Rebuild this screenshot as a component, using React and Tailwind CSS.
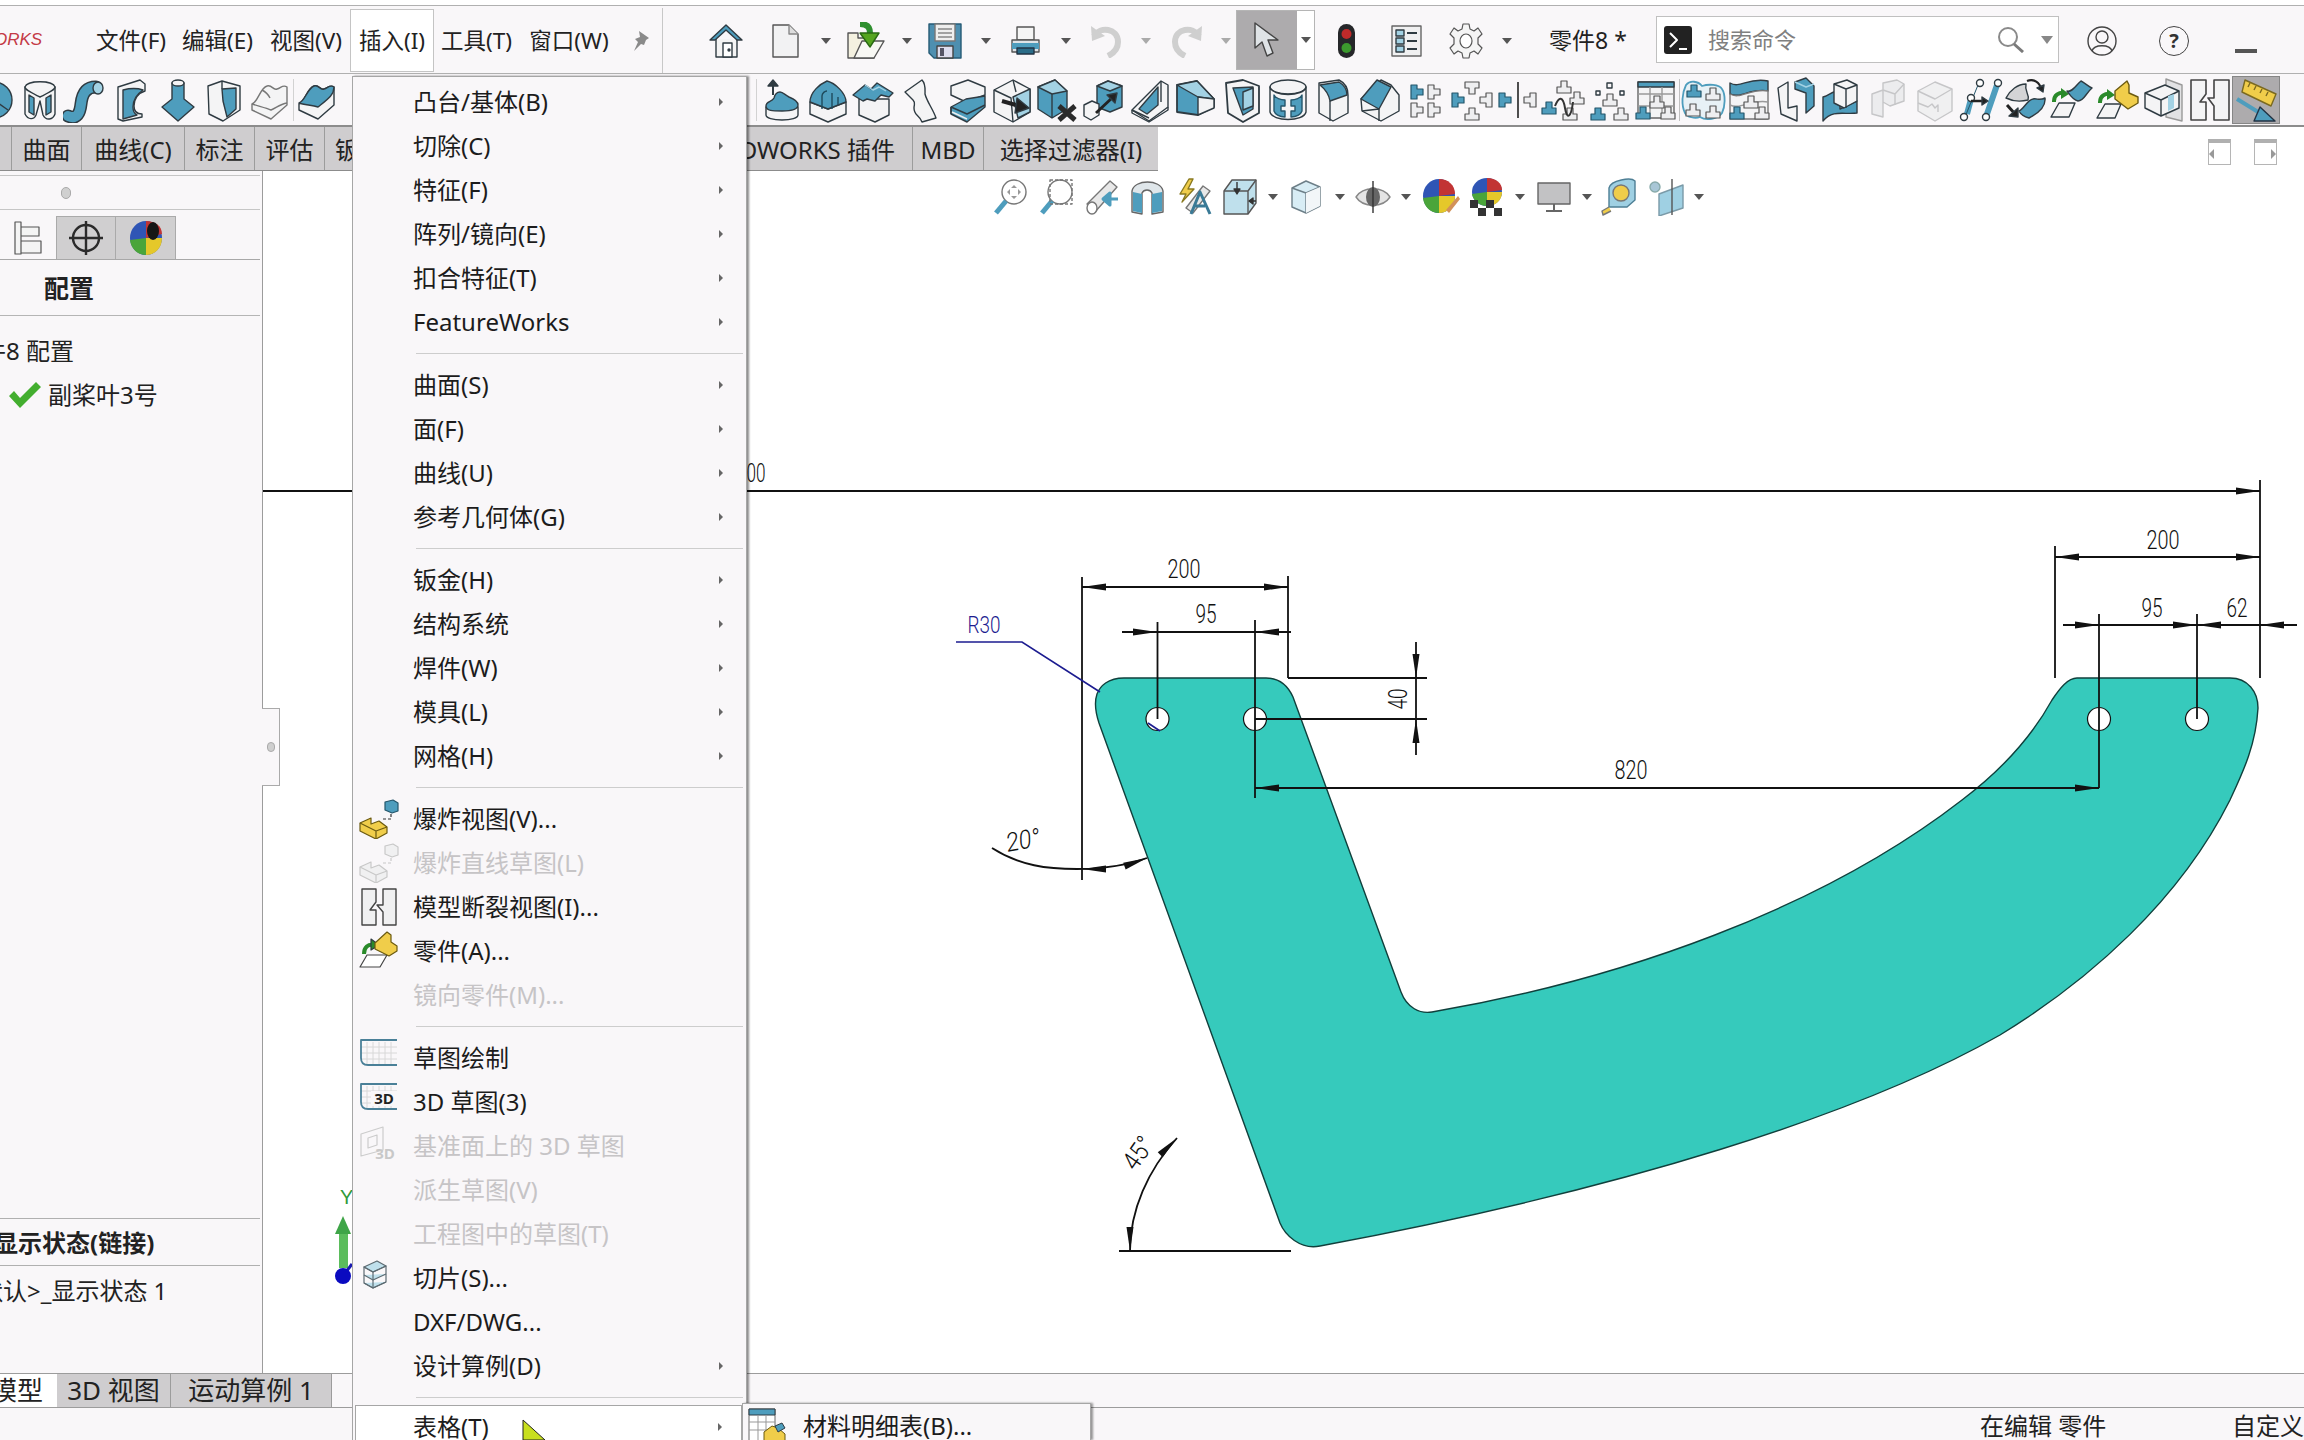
const INK = "#2f3b42";
const BL = "#4e9dbd";
const LB = "#a3d2e4";
const WH = "#f4f4f5";
const YE = "#f0cd4a";

function Ic({ children, w = 46, h = 46, box = "0 0 46 46", sw = 1.4 }) {
  return (
    <svg width={w} height={h} viewBox={box} fill="none" stroke={INK} strokeWidth={sw} strokeLinejoin="round" className="shrink-0 block">
      {children}
    </svg>
  );
}

function Tee({ x, y, r = 0, blue }) {
  return <path transform={`translate(${x} ${y}) rotate(${r})`} d="M-7-6H7V0H3V6H-3V0H-7Z" fill={blue ? BL : "#eeeef0"} stroke={blue ? "#24566b" : "#555"} strokeWidth="1.2" />;
}

function Caret({ off, className = "" }) {
  return <div className={`w-0 h-0 shrink-0 border-x-[5px] border-t-[6px] border-x-transparent ${off ? "border-t-[#aaaaaa]" : "border-t-[#555555]"} ${className}`} />;
}

/* left part of the feature toolbar */
const leftTools = [
  <><circle cx="23" cy="23" r="18" fill={BL} /><path d="M23 23l14 10" /></>,
  <><path d="M8 10V37c3 6 9 6 11 1l4-14 3 14c3 6 10 5 12-1V10Z" fill={WH} /><path d="M8 10c2-7 28-7 30 0 0 3-7 6-15 10-8-4-15-7-15-10Z" fill={WH} /><path d="M12 18l5 3v17l-5-3ZM34 18l-5 3v17l5-3Z" fill={BL} /></>,
  <><path d="M5 39c9 4 12-3 13-12s4-17 15-17" stroke={INK} strokeWidth="13" strokeLinecap="round" /><path d="M5 39c9 4 12-3 13-12s4-17 15-17" stroke={BL} strokeWidth="10" strokeLinecap="round" /><ellipse cx="35" cy="11" rx="5" ry="6" fill={LB} /></>,
  <><path d="M9 10 31 3l5 4v7c-7 2-11 8-11 15 0 5 3 8 8 8v3L14 44l-5-2Z" fill={WH} /><path d="M14 13c8-2 14-2 20 0-6 4-10 10-10 17 0 4 2 7 4 8l-14 4Z" fill={BL} /></>,
  <><path d="M17 6V22L7 30 23 44 39 30 29 22V6Z" fill={BL} /><ellipse cx="23" cy="6" rx="6" ry="3" fill={WH} /></>,
  <><path d="M7 9 21 4 39 9V33L22 44 8 37Z" fill={WH} /><path d="M21 12 35 11V32L26 40 22 24Z" fill={BL} /><path d="M21 4V12" /></>,
  <g stroke="#777"><path d="M5 27c6-2 8-16 15-18 5-2 6 5 10 3 4-1 6-5 10-2V28L24 42 5 33Z" fill={WH} /><path d="M5 27c6 2 14 4 19 6 5-2 9-6 16-7" /><path d="M15 13c4 2 6 4 8 8" /></g>,
  <><path d="M5 27c6-2 8-16 15-18 5-2 6 5 10 3 4-1 6-5 10-2V28L24 42 5 33Z" fill={WH} /><path d="M5 26c6-2 8-14 15-17 5-2 6 5 10 3 4-1 6-5 10-2 0 8-6 12-16 20C18 28 10 28 5 26Z" fill={BL} /></>,
];

/* feature toolbar, first group */
const midTools = [
  <><path d="M7 30v8c0 3 7 5 16 5s16-2 16-5v-8Z" fill={WH} /><path d="M7 29c0-5 6-4 8-8 1-4 3-6 6-6s5 3 9 5c5 2 9 4 9 8 0 4-7 6-16 6S7 34 7 29Z" fill={BL} /><path d="M14 18V6" strokeWidth="2" /><path d="M9 9l5-6 5 6Z" fill={INK} /></>,
  <><path d="M5 25V37L23 45 41 37V25L23 32Z" fill={WH} /><path d="M5 25C5 15 15 7 22 4c8 2 19 12 19 21L23 32Z" fill={BL} /><path d="M17 32V19c0-3 3-5 5-5M27 32V16M33 28V20" stroke="#1e4a5c" /></>,
  <><path d="M8 22V38L24 45 38 38V22Z" fill={WH} /><path d="M2 18 14 8l6 4 6-6 16 10-4 4-8-2-6 6-8-2-4 2Z" fill={BL} /><path d="M14 8l8 5 6-3 7 4" stroke={LB} /></>,
  <path d="M8 15 25 3c4 4 3 10 3 14 2 8 8 15 11 24l-14 4c-3-8-8-6-8-14 0-4 2-5-1-8Z" fill={WH} />,
  <><path d="M8 9 25 3 42 10V18L23 25 8 18Z" fill={WH} /><path d="M8 30 23 22 42 19V30L24 45 8 37Z" fill={BL} /><path d="M8 30 24 37 42 28M8 37V30" /><path d="M9 35l15 7" stroke="#eee" /></>,
  <><path d="M5 13 24 3 41 12V35L24 45 5 35Z" fill={WH} /><path d="M24 20 41 12V35L29 41Z" fill={LB} /><path d="M5 13l17 8 2 24M24 3l3 12" /><path d="M13 24 30 29" strokeWidth="4" stroke="#222" /><path d="M28 21 40 31 26 36Z" fill="#222" /></>,
  <><path d="M3 10 20 3 32 14V32L17 41 3 32Z" fill={BL} /><path d="M3 10 17 17 32 14 20 3Z" fill={LB} /><path d="M17 17V41" /><path d="M24 29 40 43M40 29 24 43" stroke="#2b2b2b" strokeWidth="5" /></>,
  <><path d="M16 9 27 4 41 9V30L29 35 16 30Z" fill={BL} /><path d="M16 9 29 14 41 9 27 4Z" fill={LB} /><path d="M3 28 11 24 18 27V38L10 43 3 39Z" fill={WH} /><path d="M15 36 32 20" strokeWidth="3" stroke="#222" /><path d="M26 18 36 16 34 26Z" fill="#222" /></>,
  <><path d="M5 33 34 4 41 8V30L22 44Z" fill={WH} /><path d="M12 32 31 10V28L20 37Z" fill={BL} /><path d="M34 4V25M5 33l17 8" /><path d="M5 33V36L22 45 41 33V30" /></>,
  <><path d="M4 8 24 4 41 22V30L25 38 4 35Z" fill={BL} strokeWidth="1.8" /><path d="M4 8 24 4 41 22 25 20Z" fill={LB} /><path d="M25 20V38L41 31V22Z" fill={WH} /></>,
  <><path d="M7 6 24 3 40 9V36L24 45 9 36Z" fill={WH} strokeWidth="1.8" /><path d="M14 11 34 10V32L24 38Z" fill={BL} /><path d="M24 15 34 11V29L24 33Z" fill={LB} /></>,
  <><ellipse cx="23" cy="10" rx="18" ry="7" fill={WH} /><path d="M5 10V35c2 10 34 10 36 0V10c-2 10-34 10-36 0Z" fill={WH} /><path d="M9 18c1 3 7 5 11 5v6h-4v5h4v6c-6 0-10-3-11-6ZM37 18c-1 3-7 5-11 5v6h4v5h-4v6c6 0 10-3 11-6Z" fill={BL} stroke="#24566b" /></>,
  <><path d="M8 6 28 3c6 3 9 9 9 15V36L22 44 8 36Z" fill={WH} /><path d="M9 8 28 5c5 3 8 8 8 13L19 24c-1-6-5-12-10-16Z" fill={BL} /><path d="M19 24V44" /></>,
  <><path d="M4 22 24 3 34 8 42 18V34L24 44 5 34Z" fill={WH} /><path d="M4 22 20 3 34 10 22 32Z" fill={BL} /><path d="M22 32V44M5 34l17-2" /></>,
  <><Tee x={14} y={15} r={-90} blue /><Tee x={31} y={15} r={-90} /><Tee x={14} y={33} r={-90} /><Tee x={31} y={33} r={-90} /></>,
];

const patternTools = [
  <><Tee x={23} y={11} /><Tee x={9} y={23} r={-90} blue /><Tee x={37} y={23} r={90} /><Tee x={23} y={37} r={180} /></>,
  <><Tee x={10} y={23} r={-90} blue /><Tee x={35} y={23} r={90} /><path d="M23 5V41" strokeWidth="1.6" stroke="#222" /></>,
  <><Tee x={23} y={10} r={180} /><Tee x={8} y={31} r={180} blue /><Tee x={36} y={21} r={180} /><Tee x={29} y={37} r={180} /><path d="M14 29c4-10 8-10 10 2s6 10 8-6" stroke="#333" strokeWidth="2" /></>,
  <><rect x="20" y="6" width="5" height="5" /><rect x="9" y="14" width="4" height="4" /><rect x="33" y="14" width="4" height="4" /><Tee x={23} y={23} r={180} /><Tee x={11} y={37} r={180} blue /><Tee x={34} y={37} r={180} /></>,
  <><rect x="5" y="5" width="36" height="36" fill={WH} stroke="#666" /><rect x="5" y="5" width="36" height="5" fill={BL} /><path d="M5 17H41M5 29H41M17 10V41M29 10V41" stroke="#999" /><Tee x={24} y={25} r={180} /><Tee x={10} y={36} r={180} blue /><Tee x={35} y={36} r={180} /></>,
  <><path d="M5 8c4-5 12-4 16 1 6-2 17-2 20 3 4 6 3 18 0 24-4 6-16 8-22 4-5 2-13 0-15-4-4-8-3-20 1-28Z" fill="#e7f1f6" stroke="#4e9dbd" strokeWidth="1.8" /><Tee x={13} y={14} r={180} blue /><Tee x={32} y={17} r={180} /><Tee x={12} y={33} r={180} /><Tee x={32} y={35} r={180} /></>,
  <><path d="M3 6c10 6 18-6 38-2V14c-18-3-28 8-38 3Z" fill={BL} /><path d="M3 17c10 6 20-6 38-3V42H3Z" fill={WH} stroke="#777" /><path d="M3 28c10 5 20-6 38-3" stroke="#999" /><Tee x={24} y={25} r={180} /><Tee x={10} y={36} r={180} blue /><Tee x={35} y={36} r={180} /></>,
  <><path d="M5 11 15 5V31L24 29V44L8 37Z" fill={WH} /><path d="M22 5 33 1 41 9V29L33 36V16L22 12Z" fill={BL} /><path d="M22 5 33 10 41 7" stroke={LB} /></>,
  <><path d="M4 44V20C12 18 14 12 21 16V32L38 24V36C26 38 14 32 4 44Z" fill={BL} /><path d="M15 7 28 3 38 8V24L25 31 15 26Z" fill={WH} /><path d="M15 7 27 12 38 8M27 12V31" /></>,
  <g stroke="#c6c6c8" fill="#ececee"><path d="M7 17 18 13 18 40 7 37ZM18 6 32 3 39 7V24L25 29 18 25Z" /><path d="M18 13 30 17 39 7M30 17V28" /></g>,
  <g stroke="#c6c6c8" fill="#f0f0f1"><path d="M7 14 24 5 41 12V34L24 44 7 34Z" /><path d="M7 14 24 22 41 12M7 26l10 4 4-3 3 4 3-3v7" /></g>,
  <><path d="M10 37 14 22M30 37 40 8" stroke={BL} strokeWidth="6" /><path d="M8 40 21 8" stroke="#24566b" strokeWidth="1" /><circle cx="7" cy="40" r="3.5" fill="#fff" /><circle cx="14" cy="21" r="3.5" fill="#fff" /><circle cx="23" cy="6" r="3.5" fill="#fff" /><circle cx="29" cy="40" r="3.5" fill="#fff" /><circle cx="41" cy="6" r="3.5" fill="#fff" /><path d="M14 24H28" stroke="#222" strokeWidth="2.5" /><path d="M25 20l6 4-6 4Z" fill="#222" /></>,
  <><path d="M3 21c4-8 12-14 20-14-2 8 4 10 2 16-8 2-16 1-22-2Z" fill="#d4d4d6" /><path d="M16 34c5-2 8-11 14-12 4-1 6 2 12-1 1 9-8 16-16 20-4-1-8-3-10-7Z" fill={BL} /><path d="M24 4c7-3 13 2 14 8" strokeWidth="2.2" stroke="#222" /><path d="M34 11l6 4 1-7Z" fill="#222" /><path d="M4 28 13 38" strokeWidth="3" stroke="#222" /><path d="M6 39 15 40 15 31Z" fill="#222" /></>,
  <><path d="M2 40 10 26H26L20 40Z" fill={WH} /><path d="M5 25V24c0-6 5-9 11-8" stroke="#2a8a2a" strokeWidth="4" /><path d="M12 11l8 6-8 5Z" fill="#2a8a2a" stroke="none" /><path d="M18 14c5 2 9-6 14-10 4 2 8 6 11 7-6 5-8 13-14 13-5-1-8-6-11-10Z" fill={BL} /></>,
  <><path d="M2 41 10 27H26L20 41Z" fill={WH} /><path d="M5 26V25c0-6 5-9 11-8" stroke="#2a8a2a" strokeWidth="4" /><path d="M12 12l8 6-8 5Z" fill="#2a8a2a" stroke="none" /><path d="M20 14 32 4 34 8V16L43 20V26L33 32 20 22Z" fill={YE} stroke="#6b5a10" /></>,
  <><path d="M25 2 41 8V44L25 40Z" fill="#e2e2e4" stroke="#999" /><path d="M4 16 24 8 38 14V31L20 39 4 31Z" fill={WH} /><path d="M4 16 20 23 38 14M20 23V39" /><path d="M27 19 33 17V31L27 34Z" fill={LB} stroke="none" /></>,
  <g fill={WH} stroke="#444" strokeWidth="1.6"><path d="M4 3H19V17L13 25H19V43H4Z" /><path d="M27 3H42V43H27V29L21 21H27Z" /></g>,
];

function Ruler() {
  return (
    <>
      <path d="M12 3 43 17 38 29 9 15Z" fill={YE} stroke="#7b6a20" />
      <path d="M17 6l-2 4M23 9l-2 4M29 12l-2 4M35 15l-2 4" stroke="#7b6a20" />
      <path d="M4 22 30 38" stroke={BL} strokeWidth="4" />
      <path d="M27 30 42 44H21Z" fill={BL} stroke="#234" />
    </>
  );
}

function Tool({ children, hi }) {
  return <div className={`w-[46px] h-[46px] shrink-0 ${hi ? "bg-[#adabad] outline outline-1 outline-[#868686]" : ""}`}><Ic>{children}</Ic></div>;
}

function TitleBar() {
  const menus = [
    ["文件(F)", "w-[86px]"],
    ["编辑(E)", "w-[87px]"],
    ["视图(V)", "w-[90px]"],
    ["插入(I)", "w-[82px]"],
    ["工具(T)", "w-[87px]"],
    ["窗口(W)", "w-[98px]"],
  ];
  return (
    <div className="h-[68px] flex items-center border-b border-[#b0b0b0] bg-[#f9f7f9] pt-[2px]">
      <div className="w-[88px] h-full overflow-hidden flex items-center -mt-[1px]">
        <span className="text-[17px] italic text-[#c43a46] -ml-[6px] font-['Liberation_Sans',sans-serif]">ORKS</span>
      </div>
      {menus.map(([m, w]) => (
        <div key={m} className={`h-[61px] flex items-center justify-center text-[22.5px] text-[#222] whitespace-nowrap ${w} ${m === "插入(I)" ? "bg-white outline outline-1 outline-[#c4c4c4]" : ""}`}>{m}</div>
      ))}
      <div className="ml-[13px]">
        <Ic w={20} h={22} box="0 0 20 22" sw={0}>
          <path d="M8 1l10 7-3 2-2 5-3-1-7 7 4-9-3-3 5-2Z" fill="#8a8a8a" />
        </Ic>
      </div>
      <div className="ml-[11px] w-px h-full bg-[#c8c8c8]" />
      <div className="ml-[46px]"><Ic w={34} h={36} box="0 0 34 36"><path d="M7 16V34H28V16" fill="#f4f4f4" /><path d="M1 17 17 2 33 17 28 17 17 7 6 17Z" fill="#4e9dbd" /><rect x="14" y="20" width="9" height="14" fill="#fff" /><circle cx="20" cy="27" r="1" fill={INK} /></Ic></div>
      <div className="ml-[28px]"><Ic w={28} h={36} box="0 0 28 36"><path d="M2 2H18L27 11V34H2Z" fill="#f2f2f3" stroke="#555" /><path d="M18 2V11H27" fill="#ddd" stroke="#888" /></Ic></div>
      <Caret className="ml-[22px]" />
      <div className="ml-[15px]"><Ic w={39} h={38} box="0 0 39 38"><path d="M2 11H12V16H28V36H2Z" fill="#f4f1e0" stroke="#555" /><path d="M8 36 16 19H38L28 36Z" fill="#f8f8f4" stroke="#555" /><path d="M14 2C22 2 24 6 24 11" stroke="#2f8f2f" strokeWidth="6" /><path d="M14 11H33L24 25Z" fill="#55a51f" stroke="#2a6a14" /></Ic></div>
      <Caret className="ml-[17px]" />
      <div className="ml-[16px]"><Ic w={34} h={36} box="0 0 34 36"><path d="M1 1H33V35H6L1 30Z" fill="#4e8fb0" stroke="#255a75" /><rect x="7" y="1" width="20" height="17" fill="#eee" stroke="#777" /><path d="M10 6H24M10 10H24M10 14H24" stroke="#888" /><rect x="9" y="23" width="16" height="12" fill="#dde" stroke="#444" /><rect x="12" y="25" width="4" height="8" fill="#556" stroke="none" /></Ic></div>
      <Caret className="ml-[19px]" />
      <div className="ml-[19px]"><Ic w={31} h={30} box="0 0 31 30"><rect x="7" y="1" width="17" height="13" fill="#f5f5f5" stroke="#555" /><path d="M2 14H29V26H2Z" fill="#dfe3e6" stroke="#555" /><rect x="2" y="17" width="27" height="6" fill="#4e9dbd" stroke="none" /><rect x="7" y="22" width="17" height="6" fill="#2b6c88" stroke="#234" /></Ic></div>
      <Caret className="ml-[20px]" />
      <div className="ml-[19px]"><Ic w={32} h={34} box="0 0 32 34"><path d="M4 12C10 2 28 4 28 18 28 25 24 29 18 32" stroke="#cfcfcf" strokeWidth="6" /><path d="M1 2 2 17 15 12Z" fill="#cfcfcf" stroke="none" /></Ic></div>
      <Caret off className="ml-[19px]" />
      <div className="ml-[19px]"><Ic w={33} h={34} box="0 0 33 34"><path d="M29 12C23 2 5 4 5 18 5 25 9 29 15 32" stroke="#cfcfcf" strokeWidth="6" /><path d="M32 2 31 17 18 12Z" fill="#cfcfcf" stroke="none" /></Ic></div>
      <Caret off className="ml-[18px]" />
      <div className="ml-[5px] h-[60px] w-[79px] flex border border-[#b5b5b5] -mt-[2px]">
        <div className="w-[60px] bg-[#adabad] flex items-center justify-center">
          <Ic w={28} h={36} box="0 0 28 36"><path d="M2 1V26L9 20 14 34 20 31 15 18 25 18Z" fill="#dfe3e6" stroke="#444" /></Ic>
        </div>
        <div className="flex-1 bg-white flex items-center justify-center"><Caret /></div>
      </div>
      <div className="ml-[23px]"><Ic w={17} h={34} box="0 0 17 34" sw={0}><rect x="0" y="0" width="17" height="34" rx="8.5" fill="#26272a" /><circle cx="8.5" cy="10" r="5" fill="#c02a2a" /><circle cx="8.5" cy="24" r="5" fill="#3c9a2e" /></Ic></div>
      <div className="ml-[36px]"><Ic w={31} h={32} box="0 0 31 32"><rect x="1" y="1" width="29" height="30" fill="#f0f0f1" stroke="#666" /><rect x="5" y="5" width="8" height="6" fill={LB} /><rect x="5" y="13" width="8" height="6" fill={LB} /><rect x="5" y="21" width="8" height="6" fill={LB} /><path d="M16 8H26M16 16H26M16 24H26" strokeWidth="2" /></Ic></div>
      <div className="ml-[27px]"><Ic w={34} h={36} box="0 0 34 36" sw={1.2}><path d="M14 1H20L21 6 25 8 29 5 33 11 29 15V21L33 25 29 31 25 28 21 30 20 35H14L13 30 9 28 5 31 1 25 5 21V15L1 11 5 5 9 8 13 6Z" fill="#f5f5f5" stroke="#555" /><ellipse cx="17" cy="18" rx="6" ry="7" fill="#fff" stroke="#555" /></Ic></div>
      <Caret className="ml-[19px]" />
      <div className="ml-[37px] w-[107px] text-[23px] text-[#222] whitespace-nowrap">零件8 *</div>
      <div className="w-[403px] h-[47px] bg-white border border-[#c0c0c0] flex items-center pl-[7px] -mt-[2px]">
        <Ic w={28} h={28} box="0 0 28 28" sw={2}><rect x="0" y="0" width="28" height="28" rx="3" fill="#222" stroke="none" /><path d="M6 7 13 14 6 21" stroke="#fff" /><path d="M15 23H23" stroke="#fff" /></Ic>
        <span className="ml-[16px] text-[22px] text-[#808080]">搜索命令</span>
        <div className="ml-[201px]"><Ic w={29} h={26} box="0 0 29 26" sw={2}><circle cx="11" cy="10" r="9" stroke="#8a8a8a" /><path d="M17 17 26 25" stroke="#7a7a7a" strokeWidth="3" /></Ic></div>
        <Caret className="ml-[15px] !border-x-[6px] !border-t-[8px] !border-t-[#888888]" />
      </div>
      <div className="ml-[28px]"><Ic w={30} h={30} box="0 0 30 30"><circle cx="15" cy="15" r="14" stroke="#444" /><circle cx="15" cy="11" r="6" stroke="#444" /><path d="M5 25c2-7 18-7 20 0" stroke="#444" /></Ic></div>
      <div className="ml-[42px] w-[30px] h-[30px] rounded-full border-[1.5px] border-[#444] flex items-center justify-center text-[20px] font-bold text-[#333]">?</div>
      <div className="ml-[46px] mt-[21px] w-[22px] h-[4px] bg-[#555]" />
    </div>
  );
}

function FeatureBar() {
  return (
    <div className="h-[53px] flex items-center border-b-2 border-[#8c8c8c] bg-[#f9f7f9] overflow-hidden">
      <div className="flex items-center -ml-[29px]">
        {leftTools.slice(0, 7).map((t, i) => <Tool key={i}>{t}</Tool>)}
        <div className="w-px h-[42px] bg-[#d2d2d2]" />
        <Tool>{leftTools[7]}</Tool>
      </div>
      <div className="ml-[416px] w-px h-[42px] bg-[#d2d2d2]" />
      <div className="ml-[2px] flex items-center">
        {midTools.map((t, i) => <Tool key={i}>{t}</Tool>)}
        {patternTools.slice(0, 5).map((t, i) => <Tool key={i}>{t}</Tool>)}
      </div>
      <div className="w-px h-[42px] bg-[#c0c0c0]" />
      <div className="ml-px flex items-center">
        {patternTools.slice(5).map((t, i) => <Tool key={i}>{t}</Tool>)}
        <Tool hi><Ruler /></Tool>
      </div>
    </div>
  );
}

function TabRow() {
  const cell = "h-full flex items-center border-r border-[#9c9c9c] justify-center shrink-0 pt-[2px]";
  return (
    <div className="h-[44px] flex">
      <div className="h-full w-[1158px] flex bg-[#cfcdcf] border-b border-[#8c8c8c] text-[24px] text-[#222] whitespace-nowrap">
        <div className={`${cell} w-[12px]`} />
        <div className={`${cell} w-[70px]`}>曲面</div>
        <div className={`${cell} w-[103px]`}>曲线(C)</div>
        <div className={`${cell} w-[70px]`}>标注</div>
        <div className={`${cell} w-[70px]`}>评估</div>
        <div className={`${cell} w-[588px] !justify-between px-[10px] pr-[17px]`}>
          <span>钣金</span>
          <span>SOLIDWORKS 插件</span>
        </div>
        <div className={`${cell} w-[71px]`}>MBD</div>
        <div className="h-full flex-1 flex items-center justify-center pt-[2px]">选择过滤器(I)</div>
      </div>
      <div className="flex-1 bg-white flex justify-end items-start pt-[12px] gap-[23px] pr-[27px]">
        <div className="w-[23px] h-[26px] border border-[#b5b5b5] border-t-[4px] border-t-[#b0b0b0] flex items-center">
          <div className="w-0 h-0 border-y-[5px] border-r-[5px] border-y-transparent border-r-[#999]" />
        </div>
        <div className="w-[23px] h-[26px] border border-[#b5b5b5] border-t-[4px] border-t-[#b0b0b0] flex items-center justify-end">
          <div className="w-0 h-0 border-y-[5px] border-l-[5px] border-y-transparent border-l-[#999]" />
        </div>
      </div>
    </div>
  );
}

function SidePanel() {
  return (
    <div className="w-[263px] shrink-0 h-full bg-[#f9f7f9] border-r border-[#9c9c9c] flex flex-col relative z-10 text-[24px] text-[#222]">
      <div className="mt-[4px] h-[35px] mr-[2px] border-y border-[#c6c6c6] flex items-center">
        <div className="ml-[61px] w-[10px] h-[12px] rounded-full bg-[#d0d0d0] border border-[#aaa]" />
      </div>
      <div className="mt-[6px] h-[44px] mr-[2px] flex border-b border-[#a8a8a8]">
        <div className="w-[56px] flex items-center justify-center">
          <Ic w={30} h={36} box="0 0 30 36" sw={1.2}><path d="M2 2H8V34H2ZM8 7H26V16H8ZM8 21H28V33H8Z" fill="#f4f4f4" stroke="#555" /></Ic>
        </div>
        <div className="w-[60px] bg-[#d0cfd0] border border-[#aaa] border-b-0 flex items-center justify-center">
          <Ic w={36} h={36} box="0 0 36 36" sw={2.4}><circle cx="18" cy="18" r="13" stroke="#2b2b2b" /><path d="M18 1V35M1 18H35" stroke="#2b2b2b" /></Ic>
        </div>
        <div className="w-[60px] bg-[#d0cfd0] border border-[#aaa] border-b-0 border-l-0 flex items-center justify-center">
          <Ic w={34} h={36} box="0 0 34 36" sw={0}>
            <ellipse cx="17" cy="18" rx="16" ry="17" fill="#2f55b5" />
            <path d="M17 18 33 14C33 6 26 1 17 1Z" fill="#c23434" />
            <path d="M17 18 33 18C33 28 26 35 17 35Z" fill="#e5c82a" />
            <path d="M17 18 1 20C2 29 9 35 17 35Z" fill="#4aa53a" />
            <ellipse cx="24" cy="11" rx="6" ry="9" fill="#161616" />
          </Ic>
        </div>
      </div>
      <div className="h-[56px] mr-[2px] border-b border-[#b5b5b5] flex items-center pl-[44px] pt-[3px] font-bold text-[25px]">配置</div>
      <div className="mt-[20px] h-[30px] -ml-[18px] flex items-center whitespace-nowrap">件8 配置</div>
      <div className="mt-[14px] h-[30px] flex items-center whitespace-nowrap">
        <div className="ml-[8px] w-[40px]">
          <Ic w={33} h={28} box="0 0 33 28" sw={0}><path d="M1 15 6 10 12 17 28 1 33 6 12 27Z" fill="#43ae2f" /></Ic>
        </div>
        副桨叶3号
      </div>
      <div className="flex-1" />
      <div className="h-[48px] mr-[2px] border-y border-[#b0b0b0] flex items-center -ml-[6px] pt-[1px] font-bold whitespace-nowrap">显示状态(链接)</div>
      <div className="h-[107px] pt-[7px] -ml-[21px] whitespace-nowrap">默认&gt;_显示状态 1</div>
      {/* collapse handle */}
      <div className="absolute left-[262px] top-[537px] w-[18px] h-[78px] bg-[#f9f7f9] border border-l-0 border-[#aaa] flex items-center justify-center">
        <div className="w-[8px] h-[10px] rounded-full bg-[#cfcfcf] border border-[#aaa]" />
      </div>
    </div>
  );
}

function Dim({ x, y, t, w, r, size = 26, fill = "#111", it }) {
  return (
    <text
      x={x}
      y={y + 9}
      textAnchor="middle"
      textLength={w}
      lengthAdjust="spacingAndGlyphs"
      fontSize={size}
      fill={fill}
      stroke="none"
      fontStyle={it ? "italic" : "normal"}
      transform={r ? `rotate(${r} ${x} ${y})` : undefined}
      className="font-['Roboto',sans-serif] font-light"
    >
      {t}
    </text>
  );
}

const dimLines = [
  [263, 491, 2260, 491], [2260, 480, 2260, 678], [1082, 577, 1082, 880], [1288, 576, 1288, 678],
  [1288, 678, 1427, 678], [1082, 587, 1288, 587], [1122, 632, 1291, 632], [1157.5, 622, 1157.5, 719],
  [1255, 620, 1255, 798], [1255, 719, 1427, 719], [1416, 642, 1416, 755], [1255, 788, 2099, 788],
  [2099, 614, 2099, 788], [2055, 546, 2055, 678], [2055, 557, 2260, 557], [2063, 625, 2297, 625],
  [2197, 614, 2197, 719], [1119, 1251, 1291, 1251],
];

const dimArrows = [
  [2260, 491, 1, 0], [1082, 587, -1, 0], [1288, 587, 1, 0], [1157, 632, 1, 0], [1255, 632, -1, 0],
  [1416, 678, 0, 1], [1416, 719, 0, -1], [1255, 788, -1, 0], [2099, 788, 1, 0], [2055, 557, -1, 0],
  [2260, 557, 1, 0], [2099, 625, 1, 0], [2197, 625, 1, 0], [2197, 625, -1, 0], [2260, 625, -1, 0],
  [1082, 869, -1, 0], [1147, 858, 0.94, -0.34], [1130, 1251, 0, 1], [1177, 1138, 0.7, -0.7],
];

function arrowPoints([x, y, dx, dy]) {
  const bx = x - dx * 24;
  const by = y - dy * 24;
  return `${x},${y} ${bx - dy * 3.5},${by + dx * 3.5} ${bx + dy * 3.5},${by - dx * 3.5}`;
}

const partPath =
  "M1124 678H1266C1280 678 1288 686 1293 697L1401 992C1407 1008 1420 1014 1432 1012C1620 980 1820 910 1962 800C1995 775 2030 740 2052 700C2060 688 2068 678 2077 678H2230C2248 678 2258 692 2258 708C2256 745 2243 772 2230 800C2180 900 2090 980 2000 1035C1860 1115 1620 1190 1320 1246C1300 1250 1285 1235 1280 1223L1099 723C1094 708 1095 700 1097 694C1100 686 1108 678 1124 678Z";

function Drawing() {
  return (
    <svg viewBox="263 171 2041 1202" width="2041" height="1202" fill="none" className="block">
      <path d={partPath} fill="#36cabc" stroke="#10403c" strokeWidth="1.4" />
      {[[1157.5, 719], [1255, 719], [2099, 719], [2197, 719]].map(([cx, cy]) => (
        <circle key={cx} cx={cx} cy={cy} r="11.5" fill="#fff" stroke="#111" strokeWidth="1.2" />
      ))}
      <g stroke="#111" strokeWidth="1.8">
        {dimLines.map(([a, b, c, d], i) => <line key={i} x1={a} y1={b} x2={c} y2={d} />)}
        <path d="M992 848C1020 866 1048 869 1077 869C1102 869 1125 866 1147 858" />
        <path d="M1130 1251C1130 1210 1148 1170 1177 1138" />
      </g>
      {dimArrows.map((a, i) => <polygon key={i} points={arrowPoints(a)} fill="#111" />)}
      <path d="M956 642H1022L1100 692M1148 723 1160 731" stroke="#1c1c90" strokeWidth="1.6" />
      <Dim x={984} y={624} t="R30" w={33} size={24} fill="#1c1c90" />
      <Dim x={1184} y={569} t="200" w={33} />
      <Dim x={1206} y={614} t="95" w={21} />
      <Dim x={1398} y={699} t="40" w={21} r={-90} />
      <Dim x={1631} y={770} t="820" w={33} />
      <Dim x={2163} y={540} t="200" w={33} />
      <Dim x={2152} y={608} t="95" w={21} />
      <Dim x={2237} y={608} t="62" w={21} />
      <Dim x={756} y={473} t="00" w={19} />
      <Dim x={1023} y={840} t="20°" w={34} r={-10} it />
      <Dim x={1138} y={1153} t="45°" w={34} r={-55} />
      {/* axis triad */}
      <text x="340" y="1204" fontSize="20" fill="#2f9a3a" stroke="none" className="font-['Liberation_Sans',sans-serif]">Y</text>
      <rect x="339" y="1232" width="9" height="36" fill="#5bbd5c" />
      <path d="M335 1234 343 1216 351 1234Z" fill="#3fa548" />
      <path d="M343 1276 352 1264" stroke="#1a1ab0" strokeWidth="3" />
      <circle cx="343" cy="1276" r="8" fill="#0a0ac0" />
    </svg>
  );
}

function HeadsUp() {
  return (
    <div className="absolute left-[731px] top-[6px] h-[40px] flex items-center">
      <Ic w={34} h={36} box="0 0 34 36"><circle cx="20" cy="13" r="12" fill="#fff" stroke="#777" /><path d="M12 22 2 34" stroke={BL} strokeWidth="5" /><path d="M20 6l-3 3h6ZM20 20l-3-3h6ZM13 13l3-3v6ZM27 13l-3-3v6Z" fill="#999" stroke="none" /></Ic>
      <div className="ml-[10px]"><Ic w={35} h={36} box="0 0 35 36"><circle cx="22" cy="13" r="12" fill="#fff" stroke="#777" /><path d="M14 22 4 34" stroke={BL} strokeWidth="5" /><rect x="12" y="1" width="22" height="24" strokeDasharray="3 2" stroke="#777" /></Ic></div>
      <div className="ml-[12px]"><Ic w={34} h={36} box="0 0 34 36"><path d="M2 25 25 2 32 8 10 33Z" fill="#e8e8e8" stroke="#777" /><ellipse cx="7" cy="29" rx="5" ry="6" fill="#fff" stroke="#777" /><path d="M33 20H18M18 20l7-6v12Z" fill={BL} stroke={BL} strokeWidth="3" /></Ic></div>
      <div className="ml-[11px]"><Ic w={35} h={36} box="0 0 35 36"><path d="M2 12C4 0 31 0 33 12V33L22 35V14C20 10 14 10 12 14V35L2 33Z" fill="#dfe6ea" stroke="#666" /><path d="M3 13 12 15V34L3 32ZM22 15 32 13V32L22 34Z" fill={BL} stroke="none" /></Ic></div>
      <div className="ml-[12px]"><Ic w={35} h={38} box="0 0 35 38"><path d="M12 1 3 16H9L5 24 17 11H11L16 1Z" fill={YE} stroke="#8a7a20" /><path d="M9 30 26 8 33 13 16 35Z" fill="#e8e8e8" stroke="#777" /><path d="M14 36 23 14 33 36M18 28H28" stroke="#3a7a96" strokeWidth="3" /></Ic></div>
      <div className="ml-[11px]"><Ic w={34} h={36} box="0 0 34 36"><path d="M1 12 9 1H33V24L25 35H1Z" fill="#bfe0ec" stroke="#555" /><path d="M1 12H25V35M25 12 33 1" stroke="#555" /><path d="M14 3V14M11 10l3 5 3-5ZM33 22H26M30 19l-4 3 4 3Z" fill="#333" stroke="#333" /></Ic></div>
      <Caret className="ml-[11px]" />
      <div className="ml-[13px]"><Ic w={30} h={34} box="0 0 30 34"><path d="M1 8 15 1 29 7V26L15 33 1 27Z" fill="#d8edf5" stroke="#6d7f88" /><path d="M1 8 15 13 29 7M15 13V33" stroke="#6d7f88" /><path d="M15 13 29 7V26L15 33Z" fill="#f2f6f8" stroke="none" /></Ic></div>
      <Caret className="ml-[14px]" />
      <div className="ml-[10px]"><Ic w={36} h={34} box="0 0 36 34"><path d="M1 17C8 6 28 6 35 17 28 28 8 28 1 17Z" fill="#e4e4e4" stroke="#888" /><ellipse cx="18" cy="17" rx="7" ry="10" fill="#666" stroke="none" /><path d="M18 1V33" stroke="#333" /></Ic></div>
      <Caret className="ml-[10px]" />
      <div className="ml-[11px]"><Ic w={38} h={38} box="0 0 38 38" sw={0}><ellipse cx="17" cy="18" rx="16" ry="17" fill="#2f55b5" /><path d="M17 18 33 16C33 7 26 1 17 1Z" fill="#c23434" /><path d="M17 18 1 20C2 29 9 35 17 35Z" fill="#4aa53a" /><path d="M17 18 33 18C33 28 26 35 17 35Z" fill="#e5c82a" /><path d="M24 32 36 18 38 21 27 35Z" fill="#d2915a" /></Ic></div>
      <div className="ml-[10px]"><Ic w={34} h={38} box="0 0 34 38" sw={0}><ellipse cx="17" cy="14" rx="15" ry="14" fill="#2f55b5" /><path d="M17 14 32 12C32 5 26 0 17 0Z" fill="#c23434" /><path d="M17 14 2 16C3 22 9 28 17 28Z" fill="#4aa53a" /><path d="M17 14H32C32 22 26 28 17 28Z" fill="#e5c82a" /><path d="M0 22H8V30H0ZM16 22H24V30H16ZM8 30H16V38H8ZM24 30H32V38H24Z" fill="#333" /></Ic></div>
      <Caret className="ml-[11px]" />
      <div className="ml-[12px]"><Ic w={34} h={30} box="0 0 34 30"><rect x="1" y="1" width="32" height="21" fill="#c2c2c4" stroke="#666" /><path d="M17 22V28M9 29H25" stroke="#666" strokeWidth="2" /></Ic></div>
      <Caret className="ml-[11px]" />
      <div className="ml-[9px]"><Ic w={36} h={38} box="0 0 36 38"><path d="M8 10C10 2 30 -1 34 3V22L26 29H8Z" fill="#9fd0e3" stroke="#4e7f95" /><circle cx="20" cy="15" r="8" fill={YE} stroke="#777" /><path d="M8 29 1 33 2 37 10 33" fill={YE} stroke="#777" /></Ic></div>
      <div className="ml-[12px]"><Ic w={35} h={38} box="0 0 35 38"><circle cx="6" cy="9" r="5" fill="#a8c6d6" stroke="#8aa" /><path d="M10 16 34 7V30L10 38Z" fill="#9fd0e3" stroke="#7a9aa8" /><path d="M23 1V37" stroke="#555" /></Ic></div>
      <Caret className="ml-[10px]" />
    </div>
  );
}

const explodeIcon = (off) => (
  <g stroke={off ? "#c8c8c8" : "#6b5a10"} fill={off ? "#f0f0f1" : YE}>
    <path d="M1 24 12 19 12 25 20 22 28 28V34L17 40 1 32Z" />
    <path d="M1 24 17 32V40M17 32 28 28" fill="none" />
    <path d="M26 3 34 1 39 4V12L33 14 26 11Z" fill={off ? "#f0f0f1" : BL} stroke={off ? "#c8c8c8" : "#24566b"} />
    <path d="M24 20H32V14" strokeDasharray="3 2" fill="none" stroke={off ? "#c8c8c8" : "#333"} />
  </g>
);

const breakIcon = (
  <g fill="#f0f0f1" stroke="#444" strokeWidth="1.4">
    <path d="M3 2H17V15L11 23H17V38H3Z" />
    <path d="M24 2H37V38H24V25L18 18H24Z" />
  </g>
);

const partIcon = (
  <g>
    <path d="M1 36 8 24H28L21 36Z" fill="#fff" stroke="#444" />
    <path d="M5 23c0-7 4-10 10-9" stroke="#2a8a2a" strokeWidth="4" fill="none" />
    <path d="M12 8l8 6-8 5Z" fill="#2a8a2a" />
    <path d="M16 12 28 1 32 4V11L38 15V20L30 25 16 18Z" fill={YE} stroke="#6b5a10" />
  </g>
);

const gridLines = (stroke) => (
  <path d="M8 4V26M14 4V26M20 4V26M26 4V26M32 4V26M2 9H38M2 15H38M2 21H38" stroke={stroke} strokeWidth="1" />
);

const sketchIcon = (
  <g fill="none">
    {gridLines("#d8d8d8")}
    <path d="M38 2H2V20C2 25 5 27 9 27H38" stroke="#4a8098" strokeWidth="1.8" />
  </g>
);

const sketch3dIcon = (
  <g fill="none">
    {gridLines("#d8d8d8")}
    <path d="M38 2H2V20C2 25 5 27 9 27H38" stroke="#4a8098" strokeWidth="1.8" />
    <rect x="12" y="9" width="26" height="15" fill="#f9f7f9" stroke="none" />
    <text x="25" y="22" textAnchor="middle" fontSize="15" fontWeight="700" fill="#222" stroke="none" className="font-['Open_Sans',sans-serif]">3D</text>
  </g>
);

const plane3dIcon = (
  <g fill="none">
    <path d="M2 8 24 1V24L2 30Z" stroke="#ccc" />
    <path d="M9 12 18 9V19L9 22Z" stroke="#ccc" />
    <text x="26" y="33" textAnchor="middle" fontSize="15" fontWeight="700" fill="#c8c8c8" stroke="none" className="font-['Open_Sans',sans-serif]">3D</text>
  </g>
);

const sliceIcon = (
  <g stroke="#5d6b72" strokeWidth="1.2">
    <path d="M4 8 17 2 26 7 13 13ZM4 16 13 21 26 15M4 24 13 29 26 23" fill="#bfe0ec" transform="translate(1 1)" />
    <path d="M5 9V25L14 30V14ZM14 14 27 8V24L14 30" fill="none" />
  </g>
);

const menuGroups = [
  [
    { t: "凸台/基体(B)", more: 1 }, { t: "切除(C)", more: 1 }, { t: "特征(F)", more: 1 },
    { t: "阵列/镜向(E)", more: 1 }, { t: "扣合特征(T)", more: 1 }, { t: "FeatureWorks", more: 1 },
  ],
  [{ t: "曲面(S)", more: 1 }, { t: "面(F)", more: 1 }, { t: "曲线(U)", more: 1 }, { t: "参考几何体(G)", more: 1 }],
  [{ t: "钣金(H)", more: 1 }, { t: "结构系统", more: 1 }, { t: "焊件(W)", more: 1 }, { t: "模具(L)", more: 1 }, { t: "网格(H)", more: 1 }],
  [
    { t: "爆炸视图(V)...", icon: explodeIcon(false) }, { t: "爆炸直线草图(L)", off: 1, icon: explodeIcon(true) },
    { t: "模型断裂视图(I)...", icon: breakIcon }, { t: "零件(A)...", icon: partIcon }, { t: "镜向零件(M)...", off: 1 },
  ],
  [
    { t: "草图绘制", icon: sketchIcon }, { t: "3D 草图(3)", icon: sketch3dIcon }, { t: "基准面上的 3D 草图", off: 1, icon: plane3dIcon },
    { t: "派生草图(V)", off: 1 }, { t: "工程图中的草图(T)", off: 1 }, { t: "切片(S)...", icon: sliceIcon },
    { t: "DXF/DWG..." }, { t: "设计算例(D)", more: 1 },
  ],
];

function MoreArrow() {
  return <div className="w-0 h-0 border-y-[4px] border-l-[4px] border-y-transparent border-l-[#666666]" />;
}

function MenuRow({ item }) {
  return (
    <div className="h-[44px] flex items-center">
      <div className="w-[60px] pl-[6px] shrink-0">
        {item.icon && <Ic w={40} h={40} box="0 0 40 40" sw={1.2}>{item.icon}</Ic>}
      </div>
      <div className={`flex-1 whitespace-nowrap ${item.off ? "text-[#c6c4c6]" : "text-[#1c1c1c]"}`}>{item.t}</div>
      {item.more && <div className="mr-[23px]"><MoreArrow /></div>}
    </div>
  );
}

function InsertMenu() {
  return (
    <div className="absolute z-20 left-[352px] top-[76px] w-[395px] h-[1364px] bg-[#f9f7f9] border border-[#a6a6a6] border-b-0 shadow-[2px_0_2px_rgba(0,0,0,0.45)] pt-[3px] text-[24px] overflow-hidden">
      {menuGroups.map((group, i) => (
        <div key={i}>
          {group.map((item) => <MenuRow key={item.t} item={item} />)}
          <div className="h-[19px] flex items-center pl-[63px] pr-[3px]"><div className="h-px flex-1 bg-[#cdcdcd]" /></div>
        </div>
      ))}
      <div className="ml-[2px] mr-[4px] h-[44px] -mt-[2px] bg-white border border-[#a6a6a6] flex items-center pl-[57px] text-[#1c1c1c]">
        <span className="flex-1">表格(T)</span>
        <div className="mr-[19px]"><MoreArrow /></div>
      </div>
    </div>
  );
}

function SubMenu() {
  return (
    <div className="absolute z-30 left-[742px] top-[1403px] w-[349px] h-[37px] bg-[#f9f7f9] border border-[#a6a6a6] border-b-0 shadow-[2px_0_2px_rgba(0,0,0,0.4)] flex items-start pl-[5px] pt-[4px] text-[24px] text-[#1c1c1c]">
      <Ic w={38} h={40} box="0 0 38 40" sw={1}>
        <rect x="1" y="1" width="26" height="32" fill="#fff" stroke="#666" />
        <rect x="1" y="1" width="26" height="6" fill={BL} />
        <path d="M1 14H27M1 22H27M10 7V33M18 7V33" stroke="#999" />
        <path d="M16 24 24 18 30 20 37 26V34L26 40 16 34Z" fill={YE} stroke="#6b5a10" />
        <path d="M27 18 34 15 37 20 30 24Z" fill={BL} />
      </Ic>
      <span className="ml-[17px] whitespace-nowrap">材料明细表(B)...</span>
    </div>
  );
}

function BottomBar() {
  const tab = "h-full flex items-center justify-center border-r border-[#9c9c9c] bg-[#cfcdcf] whitespace-nowrap";
  return (
    <div className="bg-[#f9f7f9] text-[26px] text-[#222]">
      <div className="h-[35px] flex border-t border-[#9c9c9c] border-b">
        <div className="w-[57px] h-full bg-white flex items-center justify-end pr-[14px] whitespace-nowrap overflow-hidden">模型</div>
        <div className={`${tab} w-[114px]`}>3D 视图</div>
        <div className={`${tab} w-[161px]`}>运动算例 1</div>
      </div>
      <div className="h-[32px] flex items-center text-[24px] whitespace-nowrap pt-[4px]">
        <div className="ml-[1980px] w-[253px]">在编辑 零件</div>
        <div>自定义</div>
      </div>
    </div>
  );
}

export default function App() {
  return (
    <div className="relative w-[2304px] h-[1440px] overflow-hidden bg-white flex flex-col font-['Noto_Sans','Noto_Sans_CJK_SC',sans-serif]">
      <div className="h-[6px] bg-white border-b border-[#b0b0b0] shrink-0" />
      <TitleBar />
      <FeatureBar />
      <TabRow />
      <div className="flex-1 min-h-0 flex">
        <SidePanel />
        <div className="relative flex-1 bg-white">
          <Drawing />
          <HeadsUp />
        </div>
      </div>
      <BottomBar />
      <InsertMenu />
      <SubMenu />
      <svg width="24" height="22" viewBox="0 0 24 22" className="absolute z-40 left-[522px] top-[1419px]">
        <path d="M1 1 23 21H1Z" fill="#c8df1e" stroke="#222" strokeWidth="1" />
      </svg>
    </div>
  );
}
